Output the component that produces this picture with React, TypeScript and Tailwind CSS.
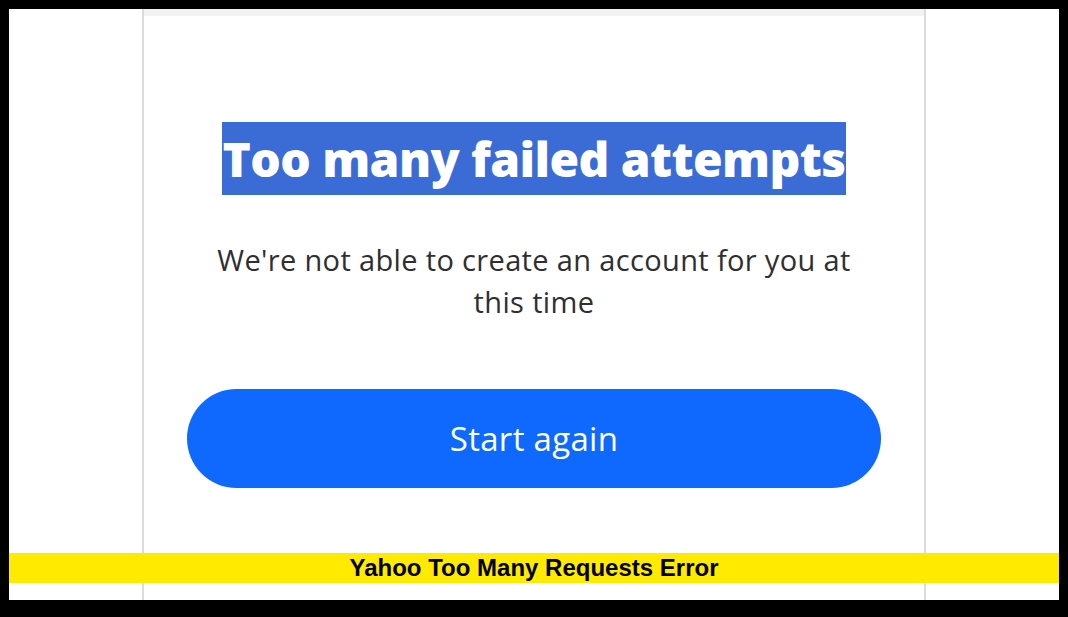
import React from "react";

export default function App() {
  return (
    <div className="w-[1068px] h-[617px] bg-black pt-[9px] pl-[9px] pr-[9px] pb-[17px] flex overflow-hidden">
      <div className="relative flex-1 bg-white flex">
        <div className="ml-[133px] w-[784px] h-full border-x-2 border-[#dcdcdc] flex flex-col items-center">
          <div className="w-full h-[7px] bg-[#f2f2f2]" />
          <div className="h-[106px]" />
          <h1
            className="h-[73px] leading-[73px] bg-[#3b6bd4] text-white text-[48px] font-extrabold tracking-[-0.6px] px-[1px]"
            style={{ fontFamily: '"Open Sans", "Noto Sans", sans-serif' }}
          >
            Too many failed attempts
          </h1>
          <p
            className="mt-[44px] text-center text-[29px] leading-[42px] tracking-[0.35px] text-[#2f2f2f]"
            style={{ fontFamily: '"Open Sans", "Noto Sans", sans-serif' }}
          >
            We're not able to create an account for you at
            <br />
            this time
          </p>
          <div className="w-full px-[43px] mt-[66px]">
            <button
              className="w-full h-[99px] rounded-full bg-[#0f69ff] text-white text-[33px] tracking-[0.3px] flex items-center justify-center"
              style={{ fontFamily: '"Open Sans", "Noto Sans", sans-serif' }}
            >
              Start again
            </button>
          </div>
        </div>
        <div
          className="absolute left-0 right-0 top-[544px] h-[30px] bg-[#ffea00] flex items-center justify-center text-black text-[24px] font-bold"
          style={{ fontFamily: '"Liberation Sans", Arial, sans-serif' }}
        >
          Yahoo Too Many Requests Error
        </div>
      </div>
    </div>
  );
}
